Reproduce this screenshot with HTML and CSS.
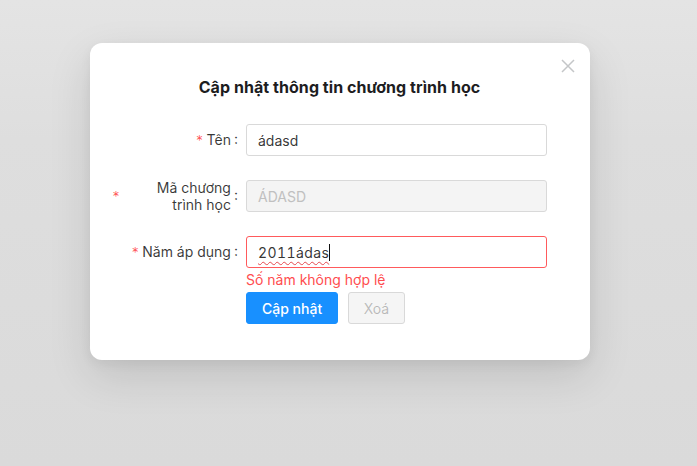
FILE: index.html
```html
<!DOCTYPE html>
<html lang="vi">
<head>
<meta charset="utf-8">
<title>Cập nhật thông tin chương trình học</title>
<link rel="stylesheet" href="styles.css">
</head>
<body>
<div class="backdrop">
  <div class="modal">
    <button class="close" aria-label="Close">
      <svg width="14" height="14" viewBox="0 0 14 14"><path d="M1 1L13 13M13 1L1 13" stroke="#c4c6c8" stroke-width="1.5" fill="none"/></svg>
    </button>
    <h2 class="title">Cập nhật thông tin chương trình học</h2>
    <form class="form">
      <div class="item">
        <label class="label"><span class="req">*</span><span class="text">Tên</span><span class="colon">:</span></label>
        <div class="control">
          <div class="input">ádasd</div>
        </div>
      </div>
      <div class="item">
        <label class="label"><span class="req">*</span><span class="text wrap">Mã chương<br>trình học</span><span class="colon">:</span></label>
        <div class="control">
          <div class="input disabled">ÁDASD</div>
        </div>
      </div>
      <div class="item last">
        <label class="label"><span class="req">*</span><span class="text">Năm áp dụng</span><span class="colon">:</span></label>
        <div class="control">
          <div class="input error"><span class="spell">2011ádas</span><span class="caret"></span></div>
          <div class="explain">Số năm không hợp lệ</div>
          <div class="actions">
            <button type="button" class="btn primary">Cập nhật</button>
            <button type="button" class="btn ghost" disabled>Xoá</button>
          </div>
        </div>
      </div>
    </form>
  </div>
</div>
</body>
</html>
```

FILE: styles.css
```css
* { box-sizing: border-box; }
html, body { margin: 0; padding: 0; }
body {
  width: 697px;
  height: 466px;
  overflow: hidden;
  font-family: Inter, "Noto Sans", sans-serif;
  font-size: 14px;
  background: linear-gradient(180deg, #e4e4e4 0%, #dedede 30%, #dadada 100%);
}
.backdrop {
  display: flex;
  padding: 43px 0 0 90px;
}
.modal {
  position: relative;
  width: 500px;
  height: 317px;
  background: #fff;
  border-radius: 12px;
  padding: 33px 24px 0 23px;
  box-shadow: 0 16px 44px rgba(0, 0, 0, 0.12), 0 4px 12px rgba(0, 0, 0, 0.05);
}
.close {
  position: absolute;
  top: 16px;
  right: 15px;
  width: 14px;
  height: 14px;
  padding: 0;
  border: 0;
  background: none;
  display: flex;
}
.title {
  margin: 0;
  text-align: center;
  font-size: 16px;
  font-weight: 650;
  line-height: 22px;
  letter-spacing: 0.05px;
  color: #1d1d1f;
}
.form {
  margin-top: 26px;
  display: flex;
  flex-direction: column;
  gap: 24px;
}
.item {
  display: flex;
  align-items: flex-start;
}
.label {
  width: 133px;
  height: 32px;
  display: flex;
  align-items: center;
  justify-content: flex-end;
  color: rgba(0, 0, 0, 0.78);
  line-height: 22px;
}
.req {
  color: #ff4d4f;
  font-family: "DejaVu Sans", sans-serif;
  font-size: 12px;
  margin-right: 4px;
}
.text {
  text-align: right;
}
.text.wrap {
  flex: 1;
  line-height: 17px;
  padding-left: 2px;
}
.colon {
  margin: 0 8px 0 3px;
  position: relative;
  top: -1px;
}
.control {
  width: 301px;
  display: flex;
  flex-direction: column;
}
.input {
  height: 32px;
  border: 1px solid #d9d9d9;
  border-radius: 3px;
  padding: 0 11px;
  display: flex;
  align-items: center;
  color: rgba(0, 0, 0, 0.8);
  background: #fff;
}
.input.disabled {
  background: #f4f4f4;
  color: #c0c0c0;
}
.input.error {
  border-color: #ff5a5c;
}
.spell {
  font-variant-numeric: tabular-nums;
  letter-spacing: 0.4px;
  text-decoration: underline wavy #e5484d;
  text-decoration-thickness: 1px;
  text-underline-offset: 3px;
}
.caret {
  display: inline-block;
  width: 1px;
  height: 17px;
  background: #111;
}
.explain {
  color: #ff4d4f;
  line-height: 24px;
  height: 24px;
  font-size: 14px;
}
.actions {
  display: flex;
  gap: 10px;
}
.btn {
  height: 32px;
  padding: 0 15px;
  border-radius: 3px;
  font-family: inherit;
  font-size: 14px;
  border: 1px solid transparent;
}
.btn.primary {
  background: #1890ff;
  color: #fff;
  border-color: #1890ff;
  font-weight: 500;
}
.btn.ghost {
  background: #f5f5f5;
  border-color: #d9d9d9;
  color: rgba(0, 0, 0, 0.25);
  padding: 0 14.5px;
}
```
